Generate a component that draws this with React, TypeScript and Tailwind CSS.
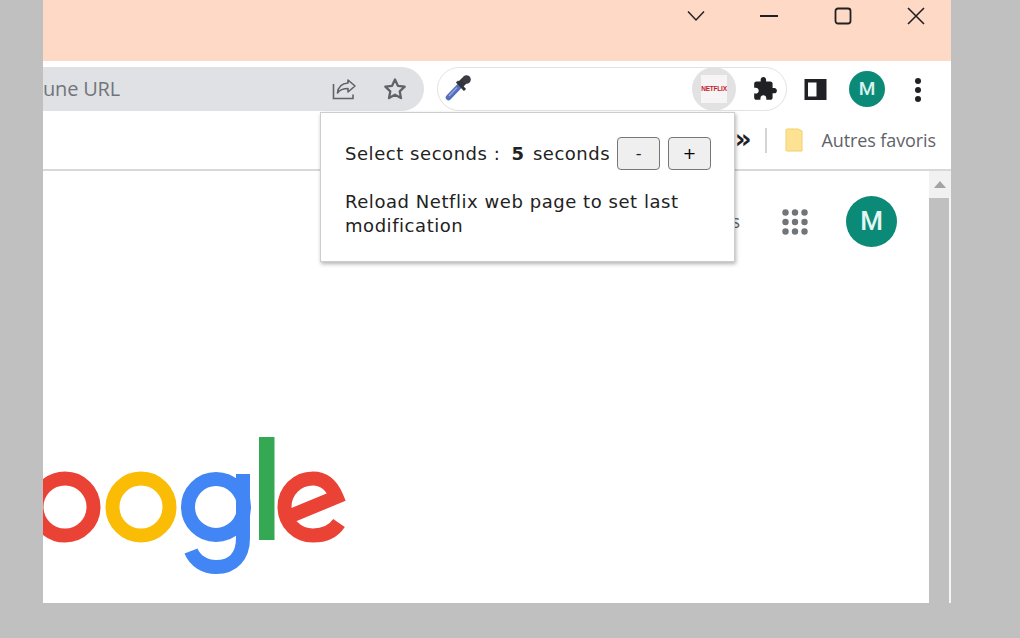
import React from "react";

function Share() {
  return (
    <svg width="28" height="28" viewBox="0 0 28 28" fill="none" stroke="#5f6368" strokeWidth="1.600">
      <path d="M3.500 9v14.500h19.500v-4" />
      <path d="M18 5l7 6-7 6v-3.500c-4.500 0-8 1-10.500 4.500.5-5.500 4-9.500 10.500-10z" strokeLinejoin="round" />
    </svg>
  );
}

function Star() {
  return (
    <svg width="24" height="24" viewBox="0 0 24 24" fill="none" stroke="#5f6368" strokeWidth="2.300" strokeLinejoin="round">
      <path d="M12 2.500l2.900 6.300 6.800.8-5 4.700 1.300 6.800-6-3.400-6 3.400 1.300-6.800-5-4.700 6.800-.8z" />
    </svg>
  );
}

function Dropper() {
  return (
    <svg width="30" height="30" viewBox="445 74 30 30" fill="none">
      <path d="M449.500 97.500L460.500 86" stroke="#5470bd" strokeWidth="5.500" strokeLinecap="round" />
      <path d="M450 96L458 87.500" stroke="#9aaae0" strokeWidth="1.300" />
      <path d="M458 81.500L466 90" stroke="#30323a" strokeWidth="3" />
      <path d="M461 85L466 80" stroke="#33353c" strokeWidth="7" />
      <circle cx="467.500" cy="79.500" r="4.300" fill="#3a3c42" />
    </svg>
  );
}

function Puzzle() {
  return (
    <svg width="26" height="26" viewBox="0 0 24 24" fill="#202124">
      <path d="M20.500 11H19V7c0-1.100-.9-2-2-2h-4V3.500C13 2.120 11.880 1 10.500 1S8 2.120 8 3.500V5H4c-1.100 0-1.990.9-1.990 2v3.800H3.500c1.490 0 2.700 1.210 2.700 2.700s-1.210 2.700-2.700 2.700H2V20c0 1.100.9 2 2 2h3.800v-1.500c0-1.490 1.210-2.700 2.700-2.700 1.490 0 2.700 1.210 2.700 2.700V22H17c1.100 0 2-.9 2-2v-4h1.500c1.380 0 2.500-1.120 2.500-2.500S21.880 11 20.500 11z" />
    </svg>
  );
}

function SidePanel() {
  return (
    <svg width="23" height="23" viewBox="0 0 23 23">
      <path d="M0.500 1h22v21h-22z M4 4.500v14h8.500v-14z" fill="#202124" fillRule="evenodd" />
    </svg>
  );
}

function Logo() {
  return (
    <svg width="310" height="150" viewBox="43 430 310 150" fill="none" strokeWidth="14" className="block">
      <circle cx="65" cy="507" r="28.500" stroke="#ea4335" />
      <circle cx="141" cy="507" r="28.500" stroke="#fbbc05" />
      <circle cx="216" cy="507" r="28" stroke="#4285f4" />
      <path d="M191 551C195 561 205 567 216 567C233 567 243 556 243 538V474" stroke="#4285f4" />
      <rect x="259" y="437" width="15.500" height="103" fill="#34a853" />
      <path
        d="M339 523C333 532 324 535.500 313 535.500C297 535.500 284.500 523 284.500 507C284.500 491 297 478.500 313 478.500C325 478.500 332 486 336.500 497L288 517"
        stroke="#ea4335"
      />
    </svg>
  );
}

function Popup() {
  return (
    <div className="absolute left-[277px] top-[112px] w-[415px] h-[150px] bg-white border border-[#cdcdcd] shadow-[1px_2px_4px_rgba(0,0,0,0.3)] pl-[24px] pt-[24px] text-[#222] text-[18px] leading-[24px] font-['DejaVu_Sans',sans-serif] z-10">
      <div className="flex items-center h-[33px]">
        <span className="tracking-[0.55px] whitespace-pre">Select seconds :</span>
        <b className="ml-[11px]">5</b>
        <span className="ml-[9px] tracking-[0.5px]">seconds</span>
        <button className="ml-[7px] w-[43px] h-[33px] bg-[#efefef] border border-[#767676] rounded-[4px] text-[16px] text-[#222]">-</button>
        <button className="ml-[8px] w-[43px] h-[33px] bg-[#efefef] border border-[#767676] rounded-[4px] text-[16px] text-black">+</button>
      </div>
      <p className="mt-[20px] w-[360px] tracking-[0.55px]">Reload Netflix web page to set last modification</p>
    </div>
  );
}

export default function App() {
  return (
    <div className="w-[1020px] h-[638px] bg-[#c0c0c0] overflow-hidden pl-[43px] font-['Open_Sans',sans-serif]">
      <div className="relative w-[908px] h-[603px] flex flex-col bg-white">
        <header className="h-[61px] bg-[#fdd9c6] flex justify-end items-start shrink-0">
          <svg width="18" height="12" viewBox="0 0 18 12" fill="none" stroke="#202124" strokeWidth="1.500" className="mt-[10px]">
            <path d="M1 1.500l8 8.500 8-8.500" />
          </svg>
          <svg width="18" height="4" viewBox="0 0 18 4" className="ml-[55px] mt-[14px]">
            <rect y="1" width="18" height="2" fill="#202124" />
          </svg>
          <svg width="18" height="18" viewBox="0 0 18 18" fill="none" stroke="#202124" strokeWidth="1.800" className="ml-[56px] mt-[7px]">
            <rect x="1.500" y="1.500" width="15" height="15" rx="2.500" />
          </svg>
          <svg width="18" height="18" viewBox="0 0 18 18" fill="none" stroke="#202124" strokeWidth="1.600" className="ml-[55px] mr-[26px] mt-[7px]">
            <path d="M1 1l16 16M17 1L1 17" />
          </svg>
        </header>

        <div className="h-[50px] flex items-start pt-[6px] shrink-0">
          <div className="w-[381px] h-[44px] bg-[#e0e1e4] rounded-r-[22px] flex items-center overflow-hidden">
            <span className="w-[77px] shrink-0 whitespace-nowrap text-[20px] text-[#70757a] tracking-[-0.2px]">une URL</span>
            <div className="ml-[210px]"><Share /></div>
            <div className="ml-[25px]"><Star /></div>
          </div>
          <div className="ml-[13px] w-[350px] h-[44px] rounded-[22px] border border-[#e3e3e3] bg-white flex items-center pl-[6px]">
            <Dropper />
            <div className="ml-[218px] w-[44px] h-[44px] shrink-0 rounded-full bg-[#e2e2e2] flex items-center justify-center">
              <div className="w-[26px] h-[28px] bg-[#f6f4f4] flex items-center justify-center">
                <span className="text-[6.500px] leading-none font-bold text-[#c8202a] font-['Liberation_Sans',sans-serif] tracking-[-0.2px]">NETFLIX</span>
              </div>
            </div>
            <div className="ml-[16px]"><Puzzle /></div>
          </div>
          <div className="ml-[17px] mt-[11px]"><SidePanel /></div>
          <div className="ml-[22px] mt-[4px] w-[36px] h-[36px] rounded-full bg-[#0b8a78] flex items-center justify-center text-[#d9f3ee] text-[19px] font-medium font-['Roboto',sans-serif]">M</div>
          <svg width="8" height="26" viewBox="0 0 8 26" fill="#202124" className="ml-[29px] mt-[10px]">
            <circle cx="4" cy="4" r="3" />
            <circle cx="4" cy="13" r="3" />
            <circle cx="4" cy="22" r="3" />
          </svg>
        </div>

        <div className="h-[60px] border-b-2 border-[#d8d8d8] flex items-center justify-end shrink-0">
          <span className="font-bold text-[26px] leading-none text-[#202124] font-['DejaVu_Sans',sans-serif] mb-[3px]">»</span>
          <div className="ml-[14px] w-[2px] h-[25px] bg-[#d4d4d4]" />
          <svg width="20" height="24" viewBox="0 0 20 24" className="ml-[18px]">
            <path d="M1 2a1 1 0 0 1 1-1h11l4 2v20H2a1 1 0 0 1-1-1z" fill="#fde293" stroke="#f2cf6a" />
          </svg>
          <span className="ml-[16px] mr-[15px] text-[18px] text-[#5f6368] tracking-[-0.1px]">Autres favoris</span>
        </div>

        <div className="flex-1 flex min-h-0">
          <main className="flex-1 min-w-0 overflow-hidden">
            <div className="flex items-center justify-end pt-[25px] pr-[32px]">
              <span className="text-[18px] text-[#5f6368]">Images</span>
              <svg width="28" height="28" viewBox="0 0 28 28" fill="#70757a" className="ml-[41px]">
                <circle cx="4.500" cy="4.500" r="3.200" /><circle cx="14" cy="4.500" r="3.200" /><circle cx="23.500" cy="4.500" r="3.200" />
                <circle cx="4.500" cy="14" r="3.200" /><circle cx="14" cy="14" r="3.200" /><circle cx="23.500" cy="14" r="3.200" />
                <circle cx="4.500" cy="23.500" r="3.200" /><circle cx="14" cy="23.500" r="3.200" /><circle cx="23.500" cy="23.500" r="3.200" />
              </svg>
              <div className="ml-[37px] w-[51px] h-[51px] rounded-full bg-[#0b8a78] flex items-center justify-center text-[#e3f6f2] text-[26px] font-medium font-['Roboto',sans-serif]">M</div>
            </div>
            <div className="mt-[183px]"><Logo /></div>
          </main>
          <aside className="w-[22px] shrink-0 flex flex-col bg-[#f6f6f6]">
            <div className="h-[27px] bg-[#f1f1f1] flex items-center justify-center">
              <div className="w-0 h-0 border-x-[6px] border-x-transparent border-b-[7px] border-b-[#a3a3a3]" />
            </div>
            <div className="flex-1 w-[20px] bg-[#c0c0c0]" />
          </aside>
        </div>

        <Popup />
      </div>
    </div>
  );
}
